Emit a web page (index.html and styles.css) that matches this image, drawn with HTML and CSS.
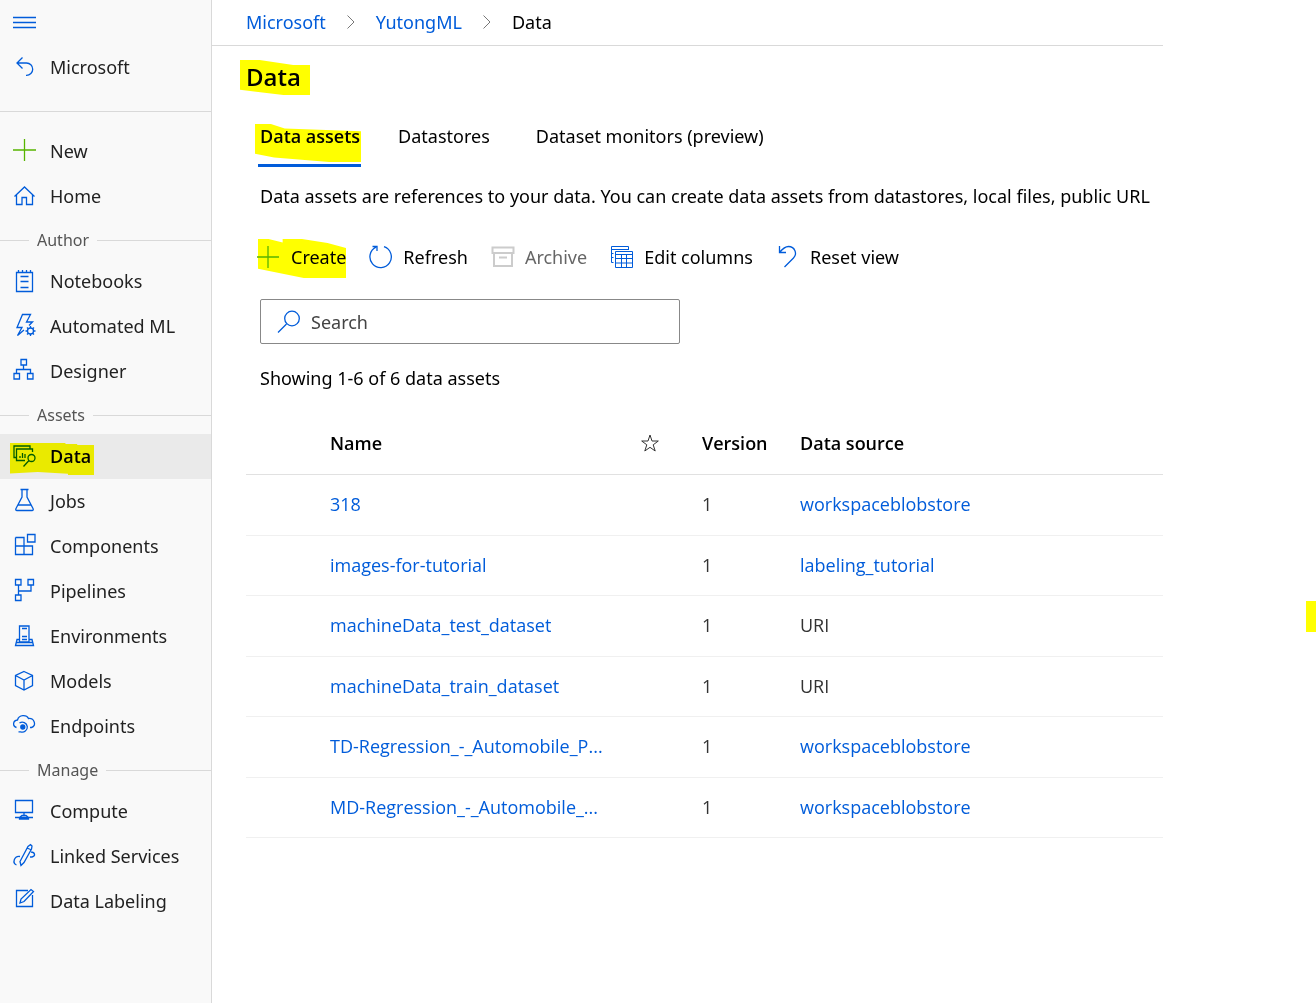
FILE: index.html
```html
<!DOCTYPE html>
<html lang="en">
<head>
<meta charset="utf-8">
<meta name="viewport" content="width=device-width, initial-scale=1">
<title>Data - YutongML</title>
<link rel="stylesheet" href="styles.css">
</head>
<body>
<div class="app">
  <nav class="sidebar" aria-label="Workspace">
    <button class="nav-item" type="button" aria-label="Toggle navigation">
      <svg class="icon" viewBox="0 0 24 24"><path d="M1 7.500h23M1 12.500h23M1 17.500h23"/></svg>
    </button>
    <a class="nav-item" href="#"><svg class="icon" viewBox="0 0 24 24"><path d="M10.500 2.500L5 8l5.500 5.500M5 8h9.500a6.200 6.200 0 0 1 0 12.400H14"/></svg>Microsoft</a>
    <hr class="rule">
    <a class="nav-item" href="#"><svg class="icon green" viewBox="0 0 24 24"><path d="M12.500 0v22M1 11h23"/></svg>New</a>
    <a class="nav-item" href="#"><svg class="icon" viewBox="0 0 24 24"><path d="M2.500 12.500l10-9.500 10 9.500M4.500 11v9.500H10v-7h4.500v7H20.500v-9.500"/></svg>Home</a>

    <h2 class="group">Author</h2>
    <a class="nav-item" href="#"><svg class="icon" viewBox="0 0 24 24"><path d="M4.500 3.500h16v19h-16zM6.500 1v2.500M10.500 1v2.500M14.500 1v2.500M18.500 1v2.500M8.500 7.500h8M8.500 12.500h8M8.500 18.500h8"/></svg>Notebooks</a>
    <a class="nav-item" href="#"><svg class="icon" viewBox="0 0 24 24"><path d="M12 16l-6.500 5.500 4.500-8H5L10.500.5h8l-4 7.500h6l-3.500 3.500"/><circle cx="18.500" cy="17" r="3"/><path d="M18.500 12v2M18.500 20v2M13.500 17h2M21.500 17h2M15 13.500l1.400 1.400M20.600 19.100l1.400 1.400M15 20.500l1.400-1.400M20.600 14.900l1.400-1.400"/></svg>Automated ML</a>
    <a class="nav-item" href="#"><svg class="icon" viewBox="0 0 24 24"><path d="M9 .5h5.500V6H9zM2 14.500h5.500V20H2zM15.500 14.500H21V20h-5.500zM11.500 6v4.500M4.500 14.500v-4h14v4"/></svg>Designer</a>

    <h2 class="group">Assets</h2>
    <a class="nav-item active mark mark-nav" href="#" aria-current="page"><svg class="icon" viewBox="0 0 24 24"><path d="M4.500 13.500H2V2h16v2.500M13 16.500H4.500V5h16V8M8 14v-2M10.500 14V9M13 14v-4"/><circle cx="19.500" cy="14" r="3.500"/><path d="M17 16.500l-5.500 6"/></svg>Data</a>
    <a class="nav-item" href="#"><svg class="icon" viewBox="0 0 24 24"><path d="M8.500.5h8M10 .5v7.500L4 19.500q-.8 2 1 2h15q1.800 0 1-2L15 8V.5M6 16h13"/></svg>Jobs</a>
    <a class="nav-item" href="#"><svg class="icon" viewBox="0 0 24 24"><path d="M3.500 3.500H12v17M3.500 3.500v17h17V12h-17M15.500.5h7.500V8h-7.500z"/></svg>Components</a>
    <a class="nav-item" href="#"><svg class="icon" viewBox="0 0 24 24"><path d="M3.500.5H9V6H3.500zM16 .5h5.500V6H16zM3.500 16H9v5.500H3.500zM6.500 6v10M6.500 12h12.500V6"/></svg>Pipelines</a>
    <a class="nav-item" href="#"><svg class="icon" viewBox="0 0 24 24"><path d="M7.500 2h9.500V18H7.500zM10 4.500h5M10 12.500h5M10 15.500h5M7.500 15.500H5L3.500 21.500h18L20 15.500h-3M4 18.500h17"/></svg>Environments</a>
    <a class="nav-item" href="#"><svg class="icon" viewBox="0 0 24 24"><path d="M12 2.500l8.500 4v10L12 21 3.500 16.500v-10zM3.500 6.500L12 11 20.500 6.500M12 11v10"/></svg>Models</a>
    <a class="nav-item" href="#"><svg class="icon" viewBox="0 0 24 24"><path d="M4.500 13.500C.5 12.500.5 6.500 5.500 6 7 .5 14.500.5 16.500 4.500c6-.5 8.500 7.500 3 9H18M7.500 9a5 5 0 1 1 1 8.800H6.500"/><circle cx="10.800" cy="13" r="2" fill="currentColor"/></svg>Endpoints</a>

    <h2 class="group">Manage</h2>
    <a class="nav-item" href="#"><svg class="icon" viewBox="0 0 24 24"><path d="M3.500 1.500h17V13.500h-17zM12 13.500v3M3 18.500h18M7.500 18.500l2.500-2h4l2.500 2v1.500h-9z"/></svg>Compute</a>
    <a class="nav-item" href="#"><svg class="icon" viewBox="0 0 24 24"><path d="M9 21.500l-1-4L16 2.500l2.500-2 1.500 1.500-.5 3L12 18.500zM15 4l3.500 1.500M8 12.500c-6-1-8 7-3.500 8.500M19 8c4 0 5 4 1 5h-2"/></svg>Linked Services</a>
    <a class="nav-item" href="#"><svg class="icon" viewBox="0 0 24 24"><path d="M16 1.500H4.500v16h16V6M8 14l1-4L19 .5l2.500 2L12 12.500z"/></svg>Data Labeling</a>
  </nav>

  <main class="content">
    <nav class="crumbs" aria-label="Breadcrumb">
      <a href="#">Microsoft</a>
      <svg class="chevron" viewBox="0 0 8 14"><path d="M.5 .5L7 7 .5 13.500"/></svg>
      <a href="#">YutongML</a>
      <svg class="chevron" viewBox="0 0 8 14"><path d="M.5 .5L7 7 .5 13.500"/></svg>
      <span>Data</span>
    </nav>

    <h1 class="title"><span class="mark mark-title">Data</span></h1>

    <div class="panel">
      <div class="tabs" role="tablist">
        <button class="tab selected mark mark-tab" type="button" role="tab" aria-selected="true">Data assets</button>
        <button class="tab" type="button" role="tab" aria-selected="false">Datastores</button>
        <button class="tab" type="button" role="tab" aria-selected="false">Dataset monitors (preview)</button>
      </div>

      <p class="intro">Data assets are references to your data. You can create data assets from datastores, local files, public URL</p>

      <div class="toolbar">
        <button class="tool mark mark-create" type="button"><svg class="icon green" viewBox="0 0 24 24"><path d="M11 1v22M0 12h22"/></svg>Create</button>
        <button class="tool" type="button"><svg class="icon" viewBox="0 0 24 24"><path d="M7 2.200a10.700 10.700 0 1 0 8-.5M3.500 1.500H8V6"/></svg>Refresh</button>
        <button class="tool" type="button" disabled><svg class="icon" viewBox="0 0 24 24"><path d="M1.500 2.500h21V8h-21zM3 8v13h18V8M8 12.500h8"/></svg>Archive</button>
        <button class="tool" type="button"><svg class="icon thin" viewBox="0 0 24 24"><path d="M3.500 17.500H1.500v-16h17V5M1.500 4.500h17M1.500 8.500h2M1.500 12.500h2M5.500 6.500h17v16H5.500zM5.500 9.500H22.500M5.500 13.500H22.500M5.500 18H22.500M11.500 9.500v13M16.500 9.500v13"/></svg>Edit columns</button>
        <button class="tool" type="button"><svg class="icon" viewBox="0 0 24 24"><path d="M3.500 1v6.500H10M3.500 7.500C8 2 10 1.500 12.500 1.500c6.500 0 9 7.500 5 11.500L8.500 22"/></svg>Reset view</button>
      </div>

      <label class="search">
        <svg class="icon" viewBox="0 0 24 24"><circle cx="15" cy="8.500" r="7.300"/><path d="M9.500 14L1 22.500"/></svg>
        <input type="search" placeholder="Search" aria-label="Search">
      </label>

      <p class="count">Showing 1-6 of 6 data assets</p>
    </div>

    <table class="assets">
      <thead>
        <tr>
          <th class="col-name" scope="col">Name</th>
          <th class="col-star" scope="col" aria-label="Favorite"><svg class="star" viewBox="0 0 20 20"><path d="M10 2l2 6h6.300l-5.100 3.800 2 6.200L10 14.300 4.800 18l2-6.200L1.700 8H8z"/></svg></th>
          <th class="col-version" scope="col">Version</th>
          <th scope="col">Data source</th>
        </tr>
      </thead>
      <tbody>
        <tr><td class="col-name"><a href="#">318</a></td><td></td><td>1</td><td><a href="#">workspaceblobstore</a></td></tr>
        <tr><td class="col-name"><a href="#">images-for-tutorial</a></td><td></td><td>1</td><td><a href="#">labeling_tutorial</a></td></tr>
        <tr><td class="col-name"><a href="#">machineData_test_dataset</a></td><td></td><td>1</td><td>URI</td></tr>
        <tr><td class="col-name"><a href="#">machineData_train_dataset</a></td><td></td><td>1</td><td>URI</td></tr>
        <tr><td class="col-name"><a href="#">TD-Regression_-_Automobile_P...</a></td><td></td><td>1</td><td><a href="#">workspaceblobstore</a></td></tr>
        <tr><td class="col-name"><a href="#">MD-Regression_-_Automobile_...</a></td><td></td><td>1</td><td><a href="#">workspaceblobstore</a></td></tr>
      </tbody>
    </table>
  </main>
  <div class="edge-mark"></div>
</div>
</body>
</html>
```
FILE: styles.css
```css
:root {
  --blue: #015cda;
  --ink: #000;
  --line: #d9d9d9;
}

* {
  box-sizing: border-box;
}

body {
  margin: 0;
  background: #fff;
  color: var(--ink);
  font-family: "Noto Sans", "Open Sans", sans-serif;
  font-size: 18px;
  line-height: 24px;
}

button,
input {
  font: inherit;
  color: inherit;
  background: none;
  border: 0;
  padding: 0;
}

a {
  color: var(--blue);
  text-decoration: none;
}

h1,
h2,
p {
  margin: 0;
}

.app {
  position: relative;
  display: grid;
  grid-template-columns: 212px minmax(0, 1fr);
  min-height: 100vh;
  padding-right: 153px;
}

.icon {
  flex: none;
  width: 24px;
  height: 24px;
  fill: none;
  stroke: currentColor;
  stroke-width: 1.3;
  color: var(--blue);
  overflow: visible;
}

.icon.thin {
  stroke-width: 1;
}

.icon.green {
  color: #57b400;
}

/* Sidebar */

.sidebar {
  background: #f9f9f9;
  border-right: 1px solid var(--line);
}

.nav-item {
  display: flex;
  align-items: center;
  gap: 14px;
  width: 100%;
  height: 45px;
  padding: 0 0 1px 12px;
  color: #222;
}

.nav-item.active {
  background: #eaeaea;
  color: #000;
  font-family: "Open Sans", "Noto Sans", sans-serif;
  font-weight: 600;
}

.rule {
  height: 1px;
  margin: 21px 0 17px;
  border: 0;
  background: var(--line);
}

.group {
  display: flex;
  align-items: center;
  gap: 8px;
  height: 40px;
  padding-top: 2px;
  color: #555;
  font-size: 16px;
  font-weight: 400;
}

.group::before,
.group::after {
  content: "";
  width: 29px;
  height: 1px;
  background: var(--line);
}

.group::after {
  flex: 1;
}

/* Highlighter strokes over the items called out */

.mark {
  position: relative;
}

.mark::after {
  content: "";
  position: absolute;
  background: #ff0;
  mix-blend-mode: multiply;
  pointer-events: none;
}

.mark-nav::after {
  left: 10px;
  top: 9px;
  width: 84px;
  height: 32px;
  clip-path: polygon(0 0, 66% 0, 66% 3%, 80% 3%, 80% 6%, 100% 6%, 100% 100%, 69% 100%, 69% 96%, 33% 91%, 0 95%);
}

.mark-title::after {
  left: -6px;
  top: -1px;
  width: 70px;
  height: 35px;
  clip-path: polygon(0 0, 28% 0, 76% 14%, 100% 14%, 100% 100%, 62% 100%, 0 85%);
}

.mark-tab::after {
  left: -3px;
  top: 6px;
  width: 106px;
  height: 38px;
  clip-path: polygon(0 0, 15% 0, 28% 12%, 100% 19%, 100% 100%, 70% 100%, 18% 88%, 0 78%);
}

.mark-create::after {
  left: 1px;
  top: 3px;
  width: 88px;
  height: 39px;
  clip-path: polygon(0 0, 12% 0, 28% 9%, 28% 0, 50% 0, 79% 10%, 100% 23%, 100% 100%, 52% 100%, 0 76%);
}

.edge-mark {
  position: absolute;
  top: 601px;
  right: 0;
  width: 10px;
  height: 31px;
  background: #ff0;
}

/* Page header */

.crumbs {
  display: flex;
  align-items: center;
  gap: 21px;
  height: 46px;
  padding: 0 0 2px 34px;
  border-bottom: 1px solid var(--line);
}

.chevron {
  width: 8px;
  height: 14px;
  fill: none;
  stroke: #777;
}

.title {
  padding: 15px 34px 0;
  font-family: "Open Sans", "Noto Sans", sans-serif;
  font-size: 24px;
  font-weight: 600;
  line-height: 32px;
}

.title .mark {
  display: inline-block;
}

.panel {
  padding-left: 46px;
}

.tabs {
  display: flex;
  gap: 28px;
  padding-top: 25px;
}

.tab {
  height: 49px;
  padding: 0 9px 10px;
  border-bottom: 3px solid transparent;
}

.tab.selected {
  padding: 0 1px 10px 2px;
  border-color: var(--blue);
  font-family: "Open Sans", "Noto Sans", sans-serif;
  font-weight: 600;
}

.intro {
  padding: 17px 0 0 2px;
  overflow: hidden;
  white-space: nowrap;
}

.toolbar {
  display: flex;
  gap: 23px;
  margin-left: -1px;
  padding-top: 28px;
}

.tool {
  display: flex;
  align-items: center;
  gap: 10px;
  height: 42px;
}

.tool:disabled {
  color: #666;
}

.tool:disabled .icon {
  color: #ccc;
  stroke-width: 2;
}

.search {
  display: flex;
  align-items: center;
  gap: 10px;
  width: 420px;
  height: 45px;
  margin: 21px 0 0 2px;
  padding: 0 16px;
  border: 1px solid #888;
  border-radius: 2px;
}

.search input {
  flex: 1;
  min-width: 0;
  outline: 0;
}

.search input::placeholder {
  color: #444;
  opacity: 1;
}

.count {
  padding: 22px 0 0 2px;
}

/* Asset list */

.assets {
  width: calc(100% - 34px);
  margin: 24px 0 0 34px;
  border-collapse: separate;
  border-spacing: 0;
  table-layout: fixed;
  font-family: "Open Sans", "Noto Sans", sans-serif;
}

.assets th,
.assets td {
  height: 61px;
  padding: 0 0 2px;
  border-bottom: 1px solid #f0f0f0;
  text-align: left;
  color: #333;
}

.assets tbody tr:nth-child(even) td {
  height: 60px;
}

.assets th {
  border-color: #e1e1e1;
  color: #000;
  font-weight: 600;
}

.assets .col-name {
  width: 394px;
  padding-left: 84px;
  white-space: nowrap;
}

.assets .col-star {
  width: 62px;
}

.assets .col-version {
  width: 98px;
}

.star {
  display: block;
  width: 20px;
  height: 20px;
  fill: none;
  stroke: #333;
}
```
